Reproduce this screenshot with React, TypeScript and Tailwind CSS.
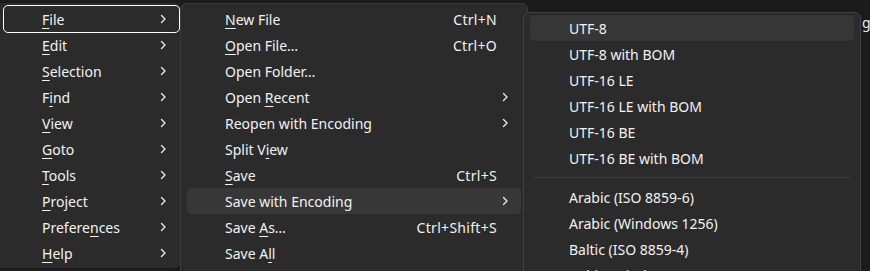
import React from 'react'

type Item = { label: string; key?: number; shortcut?: string; sub?: boolean; active?: boolean; focused?: boolean }

const font = { fontFamily: '"Noto Sans", "Open Sans", sans-serif' }

function Label({ label, k }: { label: string; k?: number }) {
  if (k === undefined) return <span>{label}</span>
  return (
    <span>
      {label.slice(0, k)}
      <u className="underline-offset-[3px]">{label[k]}</u>
      {label.slice(k + 1)}
    </span>
  )
}

function Chevron() {
  return (
    <svg width="7" height="10" viewBox="0 0 7 10" fill="none" className="text-[#e8e8e8]">
      <path d="M1.5 1.5 L5 5 L1.5 8.5" stroke="currentColor" strokeWidth="1.4" strokeLinecap="round" strokeLinejoin="round" />
    </svg>
  )
}

const mainMenu: Item[] = [
  { label: 'File', key: 0, sub: true, focused: true },
  { label: 'Edit', key: 0, sub: true },
  { label: 'Selection', key: 0, sub: true },
  { label: 'Find', key: 1, sub: true },
  { label: 'View', key: 0, sub: true },
  { label: 'Goto', key: 0, sub: true },
  { label: 'Tools', key: 0, sub: true },
  { label: 'Project', key: 0, sub: true },
  { label: 'Preferences', key: 7, sub: true },
  { label: 'Help', key: 0, sub: true },
]

const fileMenu: Item[] = [
  { label: 'New File', key: 0, shortcut: 'Ctrl+N' },
  { label: 'Open File…', key: 0, shortcut: 'Ctrl+O' },
  { label: 'Open Folder…' },
  { label: 'Open Recent', key: 5, sub: true },
  { label: 'Reopen with Encoding', sub: true },
  { label: 'Split View', key: 7 },
  { label: 'Save', key: 0, shortcut: 'Ctrl+S' },
  { label: 'Save with Encoding', sub: true, active: true },
  { label: 'Save As…', key: 5, shortcut: 'Ctrl+Shift+S' },
  { label: 'Save All', key: 6 },
]

const encodings = ['UTF-8', 'UTF-8 with BOM', 'UTF-16 LE', 'UTF-16 LE with BOM', 'UTF-16 BE', 'UTF-16 BE with BOM']
const legacy = ['Arabic (ISO 8859-6)', 'Arabic (Windows 1256)', 'Baltic (ISO 8859-4)', 'Baltic (Windows 1257)']

export default function App() {
  return (
    <div className="relative h-[271px] w-[870px] overflow-hidden bg-[#1b1b1b] text-[14px] text-[#f2f2f2]" style={font}>
      <div className="absolute left-[862px] top-[12px] text-[#e8e8e8]">gu</div>

      {/* main menu */}
      <div className="absolute left-[-6px] top-[3px] h-[265px] w-[187px] rounded-md bg-[#2b2b2b] pl-[10px] pr-[2px] pt-[3px]">
        {mainMenu.map((it) => (
          <div
            key={it.label}
            className={`flex h-[26px] items-center rounded-[4px] pl-[38px] pr-[12px] ${it.focused ? 'outline outline-1 outline-white' : ''}`}
          >
            <span className="flex-1">
              <Label label={it.label} k={it.key} />
            </span>
            {it.sub && <Chevron />}
          </div>
        ))}
      </div>

      {/* file menu */}
      <div className="absolute left-[180px] top-[3px] h-[290px] w-[348px] rounded-md border border-[#3b3b3b] bg-[#2b2b2b] px-[6px] pt-[2px]">
        {fileMenu.map((it) => (
          <div
            key={it.label}
            className={`flex h-[26px] items-center rounded-[4px] pl-[38px] pr-[12px] ${it.active ? 'bg-[#373737]' : ''}`}
          >
            <span className="flex-1">
              <Label label={it.label} k={it.key} />
            </span>
            {it.shortcut && <span className="pr-[12px] tracking-[0.3px]">{it.shortcut}</span>}
            {it.sub && <Chevron />}
          </div>
        ))}
      </div>

      {/* encoding menu */}
      <div className="absolute left-[523px] top-[12px] h-[290px] w-[338px] rounded-md border border-[#414141] bg-[#2b2b2b] px-[6px] pt-[2px]">
        {encodings.map((e, i) => (
          <div key={e} className={`flex h-[26px] items-center rounded-[4px] pl-[39px] ${i === 0 ? 'bg-[#363636]' : ''}`}>
            {e}
          </div>
        ))}
        <div className="flex h-[13px] items-center px-[4px]">
          <div className="h-px w-full bg-[#3e3e3e]" />
        </div>
        {legacy.map((e) => (
          <div key={e} className="flex h-[26px] items-center pl-[39px]">
            {e}
          </div>
        ))}
      </div>
    </div>
  )
}
